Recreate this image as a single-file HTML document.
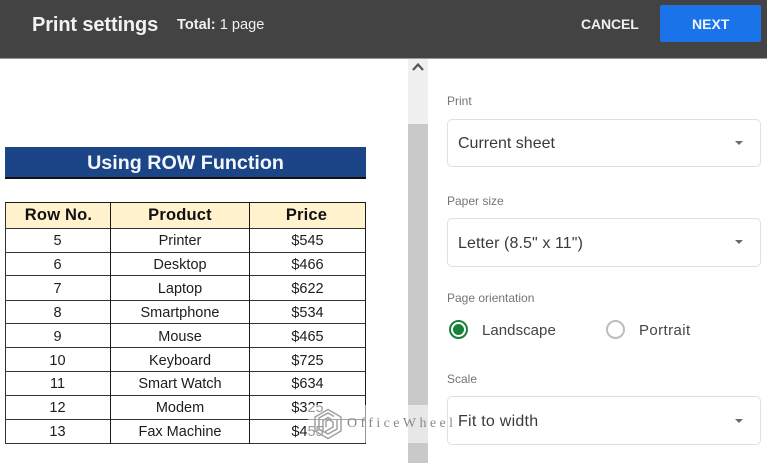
<!DOCTYPE html>
<html><head><meta charset="utf-8"><style>
html,body{margin:0;padding:0;background:#fff}
#p{position:relative;width:767px;height:463px;overflow:hidden;background:#fff;font-family:"Liberation Sans",sans-serif;filter:blur(.3px)}
.a{position:absolute;white-space:nowrap}
.l{position:absolute;background:#1a1a1a}
.c{position:absolute;text-align:center;font-size:14.5px;color:#1c1c1c;white-space:nowrap;line-height:20px;height:20px}
.h{font-weight:bold;font-size:16.5px;letter-spacing:.2px;color:#111}
.lab{font-size:12px;color:#757575;line-height:16px}
.box{position:absolute;left:447px;width:312px;border:1px solid #e0e0e0;border-radius:5px;background:#fff}
.val{font-size:16px;color:#3a3a3a;line-height:20px}
.arr{position:absolute;left:735px;width:0;height:0;border-left:4.500px solid transparent;border-right:4.500px solid transparent;border-top:4.500px solid #6a6a6a}
</style></head><body><div id="p">
<div class="a" style="left:0;top:0;width:767px;height:58px;background:#434343;border-bottom:1px solid #999"></div>
<div class="a" style="left:32px;top:13px;font-size:20px;line-height:25px;font-weight:bold;color:#f2f2f2;letter-spacing:-.12px">Print settings</div>
<div class="a" style="left:177px;top:16px;font-size:14.6px;line-height:19px;color:#f0f0f0"><b>Total:</b> 1 page</div>
<div class="a" style="left:581px;top:15px;font-size:14px;line-height:18px;font-weight:bold;color:#f0f0f0;letter-spacing:-.1px">CANCEL</div>
<div class="a" style="left:660px;top:5px;width:101px;height:37px;background:#1a73e8;border-radius:2px"></div>
<div class="a" style="left:692px;top:15px;font-size:14px;line-height:18px;font-weight:bold;color:#eef5ff">NEXT</div>

<div class="a" style="left:408px;top:59px;width:20px;height:65px;background:#f0f0f0"></div>
<div class="a" style="left:408px;top:124px;width:20px;height:339px;background:#c9c9c9"></div>
<svg class="a" style="left:408px;top:58px" width="20" height="20"><path d="M5 12 10 6.500 15 12" fill="none" stroke="#555" stroke-width="2.200"/></svg>

<div class="a" style="left:5px;top:147px;width:361px;height:30px;background:#1c4587"></div>
<div class="a" style="left:5px;top:177px;width:361px;height:2px;background:#111"></div>
<div class="a" style="left:5px;top:152px;width:361px;text-align:center;font-size:19.7px;line-height:23px;font-weight:bold;color:#f4f7fb">Using ROW Function</div>

<div class="a" style="left:5px;top:203px;width:360px;height:25px;background:#fff2cc"></div>
<div class="l" style="left:5px;top:202px;width:361px;height:1px"></div>
<div class="l" style="left:5px;top:228px;width:361px;height:1px;background:#333"></div>
<div class="l" style="left:5px;top:252px;width:361px;height:1px;background:#333"></div>
<div class="l" style="left:5px;top:275px;width:361px;height:1px;background:#333"></div>
<div class="l" style="left:5px;top:300px;width:361px;height:1px;background:#333"></div>
<div class="l" style="left:5px;top:323px;width:361px;height:1px;background:#333"></div>
<div class="l" style="left:5px;top:347px;width:361px;height:1px;background:#333"></div>
<div class="l" style="left:5px;top:371px;width:361px;height:1px;background:#333"></div>
<div class="l" style="left:5px;top:395px;width:361px;height:1px;background:#333"></div>
<div class="l" style="left:5px;top:419px;width:361px;height:1px;background:#333"></div>
<div class="l" style="left:5px;top:443px;width:361px;height:1px;background:#333"></div>
<div class="l" style="left:5px;top:202px;width:1px;height:242px;background:#333"></div>
<div class="l" style="left:110px;top:202px;width:1px;height:242px"></div>
<div class="l" style="left:249px;top:202px;width:1px;height:242px"></div>
<div class="l" style="left:365px;top:202px;width:1px;height:242px"></div>

<div class="c h" style="left:6px;width:105px;top:205px">Row No.</div><div class="c h" style="left:111px;width:138px;top:205px">Product</div><div class="c h" style="left:250px;width:113px;top:205px">Price</div>
<div class="c" style="left:5px;width:105px;top:231px">5</div><div class="c" style="left:111px;width:138px;top:231px">Printer</div><div class="c" style="left:250px;width:115px;top:231px">$545</div>
<div class="c" style="left:5px;width:105px;top:255px">6</div><div class="c" style="left:111px;width:138px;top:255px">Desktop</div><div class="c" style="left:250px;width:115px;top:255px">$466</div>
<div class="c" style="left:5px;width:105px;top:279px">7</div><div class="c" style="left:111px;width:138px;top:279px">Laptop</div><div class="c" style="left:250px;width:115px;top:279px">$622</div>
<div class="c" style="left:5px;width:105px;top:303px">8</div><div class="c" style="left:111px;width:138px;top:303px">Smartphone</div><div class="c" style="left:250px;width:115px;top:303px">$534</div>
<div class="c" style="left:5px;width:105px;top:327px">9</div><div class="c" style="left:111px;width:138px;top:327px">Mouse</div><div class="c" style="left:250px;width:115px;top:327px">$465</div>
<div class="c" style="left:5px;width:105px;top:351px">10</div><div class="c" style="left:111px;width:138px;top:351px">Keyboard</div><div class="c" style="left:250px;width:115px;top:351px">$725</div>
<div class="c" style="left:5px;width:105px;top:374px">11</div><div class="c" style="left:111px;width:138px;top:374px">Smart Watch</div><div class="c" style="left:250px;width:115px;top:374px">$634</div>
<div class="c" style="left:5px;width:105px;top:398px">12</div><div class="c" style="left:111px;width:138px;top:398px">Modem</div><div class="c" style="left:250px;width:115px;top:398px">$325</div>
<div class="c" style="left:5px;width:105px;top:422px">13</div><div class="c" style="left:111px;width:138px;top:422px">Fax Machine</div><div class="c" style="left:250px;width:115px;top:422px">$455</div>

<div class="a" style="left:308px;top:405px;width:132px;height:38px;background:rgba(255,255,255,.55)"></div>
<svg class="a" style="left:313px;top:408px" width="30" height="32" fill="none" stroke="#a0a0a0" stroke-width="1.500">
<path d="M15 1.500 28 9V23L15 30.500 2 23V9Z"/><path d="M21 8.500 15 5 6 10V21l4 2.500V12.500l5-3 3 1.800"/><path d="M24 12V21l-9 5-3.500-2 8.500-5v-5l-4-2.500-3 1.800v6"/></svg>

<div class="a lab" style="left:447px;top:93px">Print</div>
<div class="box" style="top:119px;height:46px"></div>
<div class="a val" style="left:458px;top:134px">Current sheet</div>
<div class="arr" style="top:141px"></div>

<div class="a lab" style="left:447px;top:193px">Paper size</div>
<div class="box" style="top:218px;height:47px"></div>
<div class="a val" style="left:458px;top:234px;letter-spacing:.1px">Letter (8.5" x 11")</div>
<div class="arr" style="top:240px"></div>

<div class="a lab" style="left:447px;top:290px">Page orientation</div>
<div class="a" style="left:449px;top:320px;width:15px;height:15px;border:2px solid #188038;border-radius:50%"></div>
<div class="a" style="left:453px;top:324px;width:11px;height:11px;background:#188038;border-radius:50%"></div>
<div class="a" style="left:482px;top:321px;font-size:15px;line-height:20px;color:#444;letter-spacing:.05px">Landscape</div>
<div class="a" style="left:606px;top:320px;width:15px;height:15px;border:2px solid #bdbdbd;border-radius:50%"></div>
<div class="a" style="left:639px;top:321px;font-size:15px;line-height:20px;color:#444;letter-spacing:.4px">Portrait</div>

<div class="a lab" style="left:447px;top:371px">Scale</div>
<div class="box" style="top:396px;height:47px"></div>
<div class="a" style="left:347px;top:415px;font-family:'Liberation Serif',serif;font-size:14px;line-height:18px;letter-spacing:3.400px;color:#858a92">OfficeWheel</div>
<div class="a val" style="left:458px;top:412px;letter-spacing:.25px;background:#fff">Fit to width</div>
<div class="arr" style="top:419px"></div>
</div></body></html>
